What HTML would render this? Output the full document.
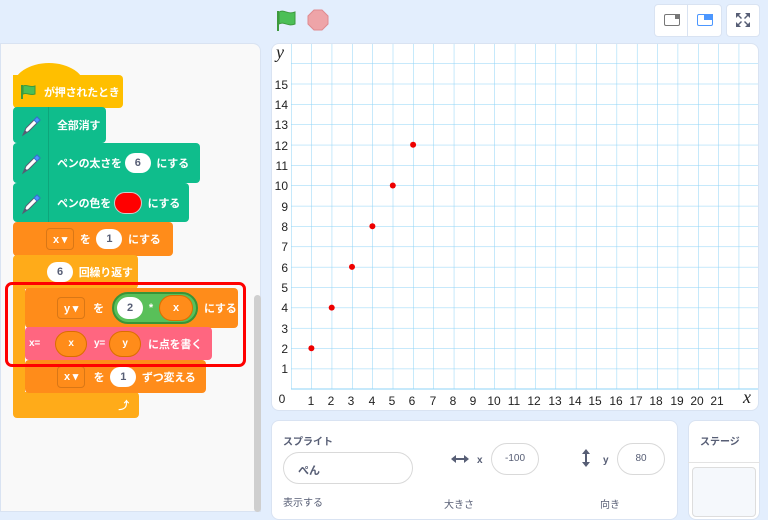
<!DOCTYPE html>
<html><head><meta charset="utf-8"><style>
*{box-sizing:border-box;margin:0;padding:0}
body{width:768px;height:512px;overflow:hidden;background:#e3eefd;font-family:"Liberation Sans","Noto Sans CJK JP",sans-serif;position:relative}
.a{position:absolute}
.blk{position:absolute;color:#fff;font-size:11px;font-weight:bold;display:flex;align-items:center;border-radius:4px;white-space:nowrap;letter-spacing:-0.2px}
.pill{display:inline-flex;align-items:center;justify-content:center;background:#fff;color:#575e75;border-radius:12px;height:20px;min-width:26px;padding:0 7px;font-size:11px;font-weight:bold}
.dd{display:inline-flex;align-items:center;justify-content:center;border:1px solid rgba(0,0,0,.15);background:#ff8c1a;border-radius:4px;height:22px;padding:0 6px;color:#fff;font-size:11px}
.ov{display:inline-flex;align-items:center;justify-content:center;background:#ff8c1a;border:1px solid #db6e00;border-radius:14px;height:26px;min-width:32px;color:#fff}
.pen{width:36px;height:100%;border-right:1px solid rgba(0,0,0,.12);display:flex;align-items:center;justify-content:center;margin-right:8px}
</style></head><body>
<div class="a" style="left:0;top:43px;width:261px;height:469px;background:#f9f9f9;border-top-right-radius:8px;border:1px solid #d9e3f2"></div>
<div class="a" style="left:254px;top:295px;width:7px;height:217px;background:#cfcfcf;border-radius:4px"></div>

<svg width="0" height="0" style="position:absolute"><defs><g id="pn"><path d="M4 22 L7 15 L18 4 L21 7 L10 18 Z" fill="#fff" stroke="#575e75" stroke-width="1"/><path d="M15 7 L18 4 L21 7 L18 10 Z" fill="#4c97ff" stroke="#3373cc" stroke-width="1"/><path d="M4 22 L6 17 L8 19 Z" fill="#575e75"/></g></defs></svg>

<div class="a" style="left:13px;top:63px;width:72px;height:30px;background:#ffbf00;border-radius:36px 36px 0 0/24px 24px 0 0"></div>
<div class="blk" style="left:13px;top:75px;width:110px;height:33px;background:#ffbf00;border-radius:0 4px 4px 4px;padding-left:7px">
<svg width="18" height="16" viewBox="0 0 18 16"><path d="M2 1v14" stroke="#3d9a3d" stroke-width="2"/><path d="M3 2c4-2 7 2 12 0v8c-5 2-8-2-12 0z" fill="#4cbf56" stroke="#3d9a3d" stroke-width="1"/></svg><span style="margin-left:6px">が押されたとき</span></div>
<div class="blk" style="left:13px;top:107px;width:93px;height:36px;background:#0fbd8c"><div class="pen"><svg width="24" height="24"><use href="#pn"/></svg></div>全部消す</div>
<div class="blk" style="left:13px;top:143px;width:187px;height:40px;background:#0fbd8c"><div class="pen"><svg width="24" height="24"><use href="#pn"/></svg></div>ペンの太さを&nbsp;<span class="pill">6</span>&nbsp;&nbsp;にする</div>
<div class="blk" style="left:13px;top:183px;width:176px;height:39px;background:#0fbd8c"><div class="pen"><svg width="24" height="24"><use href="#pn"/></svg></div>ペンの色を&nbsp;<span style="display:inline-block;width:28px;height:22px;background:#f00;border:1px solid #ccc;border-radius:11px"></span>&nbsp;&nbsp;にする</div>
<div class="blk" style="left:13px;top:222px;width:160px;height:34px;background:#ff8c1a;padding-left:33px"><span class="dd">x ▾</span>&nbsp;&nbsp;を&nbsp;&nbsp;<span class="pill">1</span>&nbsp;&nbsp;にする</div>
<div class="blk" style="left:13px;top:255px;width:125px;height:34px;background:#ffab19;padding-left:34px"><span class="pill">6</span>&nbsp;&nbsp;回繰り返す</div>
<div class="a" style="left:13px;top:285px;width:12px;height:112px;background:#ffab19"></div>
<div class="blk" style="left:13px;top:392px;width:126px;height:26px;background:#ffab19;justify-content:flex-end;padding-right:10px">⤴</div>
<div class="blk" style="left:25px;top:288px;width:213px;height:40px;background:#ff8c1a;padding-left:32px"><span class="dd">y ▾</span><span style="margin:0 8px">を</span>
<span style="display:inline-flex;align-items:center;background:#59c059;border:2px solid #389438;border-radius:16px;height:32px;padding:0 3px;gap:6px"><span class="pill" style="height:22px">2</span>*<span class="ov" style="height:26px;min-width:34px">x</span></span><span style="margin-left:6px">にする</span></div>
<div class="blk" style="left:25px;top:327px;width:187px;height:33px;background:#ff6680;padding-left:4px;font-size:10px">x=<span class="ov" style="margin-left:15px">x</span><span style="margin:0 4px 0 7px">y=</span><span class="ov">y</span><span style="margin-left:7px;font-size:11px">に点を書く</span></div>
<div class="blk" style="left:25px;top:360px;width:181px;height:33px;background:#ff8c1a;padding-left:32px"><span class="dd">x ▾</span>&nbsp;&nbsp;&nbsp;を&nbsp;&nbsp;<span class="pill">1</span>&nbsp;&nbsp;ずつ変える</div>
<div class="a" style="left:5px;top:282px;width:241px;height:85px;border:3px solid #f00;border-radius:7px"></div>

<svg class="a" style="left:275px;top:9px" width="24" height="24" viewBox="0 0 24 24"><path d="M3 2v20" stroke="#3d9a3d" stroke-width="2"/><path d="M4 3c5-3 9 3 16 0v12c-7 3-11-3-16 0z" fill="#4cbf56" stroke="#3d9a3d"/></svg>
<svg class="a" style="left:307px;top:9px" width="22" height="22" viewBox="0 0 22 22"><polygon points="7,1 15,1 21,7 21,15 15,21 7,21 1,15 1,7" fill="#eea4a8" stroke="#e08a90"/></svg>
<div class="a" style="left:654px;top:4px;width:68px;height:33px;background:#fff;border:1px solid #d9e3f2;border-radius:4px"></div>
<div class="a" style="left:687px;top:4px;width:1px;height:33px;background:#d9e3f2"></div>
<div class="a" style="left:664px;top:14px;width:16px;height:12px;border:1.5px solid #777;border-radius:2px"></div>
<div class="a" style="left:675px;top:14px;width:5px;height:5px;background:#777"></div>
<div class="a" style="left:697px;top:14px;width:16px;height:12px;border:1.5px solid #4c97ff;border-radius:2px"></div>
<div class="a" style="left:704px;top:14px;width:9px;height:6px;background:#4c97ff"></div>
<div class="a" style="left:726px;top:4px;width:34px;height:33px;background:#fff;border:1px solid #d9e3f2;border-radius:4px"></div>
<svg class="a" style="left:735px;top:12px" width="16" height="16" viewBox="0 0 16 16" fill="#575e75"><path d="M1 1h5l-2 2 3 3-1 1-3-3-2 2zM15 1v5l-2-2-3 3-1-1 3-3-2-2zM1 15v-5l2 2 3-3 1 1-3 3 2 2zM15 15h-5l2-2-3-3 1-1 3 3 2-2z"/></svg>

<div class="a" style="left:271px;top:43px;width:488px;height:368px;background:#fff;border:1px solid #d9e3f2;border-radius:8px"></div>
<svg class="a" style="left:0;top:0" width="768" height="512">
<defs><pattern id="g" x="291" y="63.4" width="20.35" height="20.35" patternUnits="userSpaceOnUse"><path d="M0 0H20.35M0 0V20.35" stroke="#8ed3f7" stroke-width="1" fill="none"/></pattern></defs>
<rect x="291" y="44" width="467" height="345" fill="url(#g)"/>
<line x1="291" y1="389" x2="758" y2="389" stroke="#8ed3f7"/>
<g fill="#e00">
<circle cx="311.4" cy="348.3" r="3"/><circle cx="331.7" cy="307.6" r="3"/><circle cx="352" cy="266.9" r="3"/><circle cx="372.4" cy="226.2" r="3"/><circle cx="392.8" cy="185.5" r="3"/><circle cx="413.1" cy="144.8" r="3"/></g>
<g font-family="Liberation Sans" font-size="12" fill="#222" text-anchor="end">
<text x="288" y="89">15</text><text x="288" y="109">14</text><text x="288" y="129">13</text><text x="288" y="150">12</text><text x="288" y="170">11</text><text x="288" y="190">10</text><text x="288" y="211">9</text><text x="288" y="231">8</text><text x="288" y="251">7</text><text x="288" y="272">6</text><text x="288" y="292">5</text><text x="288" y="312">4</text><text x="288" y="333">3</text><text x="288" y="353">2</text><text x="288" y="373">1</text></g>
<g font-family="Liberation Sans" font-size="12" fill="#222" text-anchor="middle">
<text x="282" y="403">0</text><text x="311" y="405">1</text><text x="331" y="405">2</text><text x="351" y="405">3</text><text x="372" y="405">4</text><text x="392" y="405">5</text><text x="412" y="405">6</text><text x="433" y="405">7</text><text x="453" y="405">8</text><text x="473" y="405">9</text><text x="494" y="405">10</text><text x="514" y="405">11</text><text x="534" y="405">12</text><text x="555" y="405">13</text><text x="575" y="405">14</text><text x="595" y="405">15</text><text x="616" y="405">16</text><text x="636" y="405">17</text><text x="656" y="405">18</text><text x="677" y="405">19</text><text x="697" y="405">20</text><text x="717" y="405">21</text></g>
<text x="276" y="58" font-family="Liberation Serif" font-style="italic" font-size="18" fill="#222">y</text>
<text x="743" y="403" font-family="Liberation Serif" font-style="italic" font-size="18" fill="#222">x</text>
</svg>

<div class="a" style="left:271px;top:420px;width:407px;height:100px;background:#fff;border:1px solid #d9e3f2;border-radius:8px"></div>
<div class="a" style="left:283px;top:433px;font-size:10px;font-weight:bold;color:#575e75">スプライト</div>
<div class="a" style="left:283px;top:452px;width:130px;height:32px;border:1px solid #d9d9d9;border-radius:16px;font-size:11px;font-weight:bold;color:#575e75;padding:9px 0 0 14px">ぺん</div>
<svg class="a" style="left:451px;top:454px" width="18" height="10" viewBox="0 0 18 10" fill="#575e75"><path d="M0 5l5-4v3h8v-3l5 4-5 4v-3h-8v3z"/></svg>
<div class="a" style="left:477px;top:455px;font-size:10px;color:#575e75;font-weight:bold">x</div>
<div class="a" style="left:491px;top:443px;width:48px;height:32px;border:1px solid #d9d9d9;border-radius:16px;font-size:10px;color:#575e75;text-align:center;line-height:30px">-100</div>
<svg class="a" style="left:581px;top:449px" width="10" height="18" viewBox="0 0 10 18" fill="#575e75"><path d="M5 0l4 5h-3v8h3l-4 5-4-5h3v-8h-3z"/></svg>
<div class="a" style="left:603px;top:455px;font-size:10px;color:#575e75;font-weight:bold">y</div>
<div class="a" style="left:617px;top:443px;width:48px;height:32px;border:1px solid #d9d9d9;border-radius:16px;font-size:10px;color:#575e75;text-align:center;line-height:30px">80</div>
<div class="a" style="left:283px;top:494px;font-size:10px;color:#575e75">表示する</div>
<div class="a" style="left:444px;top:496px;font-size:10px;color:#575e75">大きさ</div>
<div class="a" style="left:600px;top:496px;font-size:10px;color:#575e75">向き</div>
<div class="a" style="left:688px;top:420px;width:72px;height:100px;background:#fff;border:1px solid #d9e3f2;border-radius:8px"></div>
<div class="a" style="left:688px;top:462px;width:72px;height:1px;background:#e3e3e3"></div>
<div class="a" style="left:700px;top:433px;font-size:10px;font-weight:bold;color:#575e75">ステージ</div>
<div class="a" style="left:692px;top:467px;width:64px;height:50px;border:1px solid #ddd;border-radius:4px;background:#f5f8fc"></div>
</body></html>
